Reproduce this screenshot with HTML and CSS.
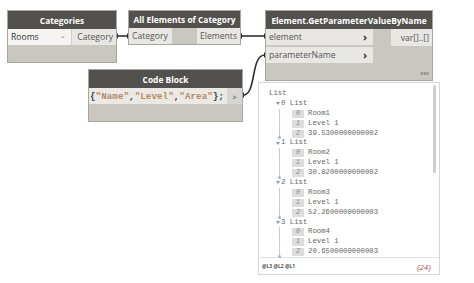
FILE: index.html
```html
<!DOCTYPE html>
<html lang="en">
<head>
    <meta charset="UTF-8">
    <title>Dynamo - Get Parameter Values</title>
    <link rel="stylesheet" href="styles.css">
</head>
<body>
    <div class="canvas">
        <svg class="wires" width="474" height="283" viewBox="0 0 474 283">
            <path d="M117 36 H128" />
            <path d="M241 36 H265" />
            <path d="M243 95 C 257 95, 250 55, 265 55" />
            <rect x="116" y="33.5" width="2" height="5" />
            <rect x="127" y="33.5" width="2" height="5" />
            <rect x="240" y="33.5" width="2" height="5" />
            <rect x="264" y="33.5" width="2" height="5" />
            <rect x="264" y="52.5" width="2" height="5" />
            <rect x="242" y="92.5" width="2" height="5" />
        </svg>

        <!-- Categories -->
        <div class="node node-categories">
            <div class="node-title">Categories</div>
            <div class="node-row">
                <div class="dropdown">
                    <span>Rooms</span>
                    <span class="caret">&#8964;</span>
                </div>
                <div class="port out">Category</div>
            </div>
            <div class="node-foot"></div>
        </div>

        <!-- All Elements of Category -->
        <div class="node node-elements">
            <div class="node-title">All Elements of Category</div>
            <div class="node-row">
                <div class="port in">Category</div>
                <div class="spacer"></div>
                <div class="port out">Elements</div>
            </div>
        </div>

        <!-- Element.GetParameterValueByName -->
        <div class="node node-param">
            <div class="node-title">Element.GetParameterValueByName</div>
            <div class="param-body">
                <div class="inputs">
                    <div class="port in"><span>element</span><b>&#8250;</b></div>
                    <div class="port in"><span>parameterName</span><b>&#8250;</b></div>
                </div>
                <div class="outputs">
                    <div class="port out">var[]..[]</div>
                </div>
            </div>
            <div class="lacing">xxx</div>
        </div>

        <!-- Code Block -->
        <div class="node node-code">
            <div class="node-title">Code Block</div>
            <div class="node-row code-row">
                <div class="code">{<em>"Name"</em>,<em>"Level"</em>,<em>"Area"</em>};</div>
                <div class="code-port">&gt;</div>
            </div>
            <div class="node-foot"></div>
        </div>

        <!-- Watch preview -->
        <div class="preview">
            <div class="preview-list">
                <div class="ln">List</div>

                <div class="ln sub"><span class="tog"></span>0 List</div>
                <div class="items">
                    <div class="ln"><span class="idx">0</span>Room1</div>
                    <div class="ln"><span class="idx">1</span>Level 1</div>
                    <div class="ln"><span class="idx">2</span>39.5300000000002</div>
                </div>

                <div class="ln sub"><span class="tog"></span>1 List</div>
                <div class="items">
                    <div class="ln"><span class="idx">0</span>Room2</div>
                    <div class="ln"><span class="idx">1</span>Level 1</div>
                    <div class="ln"><span class="idx">2</span>30.8200000000002</div>
                </div>

                <div class="ln sub"><span class="tog"></span>2 List</div>
                <div class="items">
                    <div class="ln"><span class="idx">0</span>Room3</div>
                    <div class="ln"><span class="idx">1</span>Level 1</div>
                    <div class="ln"><span class="idx">2</span>52.2600000000003</div>
                </div>

                <div class="ln sub"><span class="tog"></span>3 List</div>
                <div class="items">
                    <div class="ln"><span class="idx">0</span>Room4</div>
                    <div class="ln"><span class="idx">1</span>Level 1</div>
                    <div class="ln"><span class="idx">2</span>20.6500000000003</div>
                </div>
            </div>
            <div class="scrollbar"></div>
            <div class="preview-foot">
                <span class="levels">@L3 @L2 @L1</span>
                <span class="count">{24}</span>
            </div>
        </div>
    </div>
</body>
</html>
```

FILE: styles.css
```css
body {
    margin: 0;
    background: #ffffff;
    font-family: 'Open Sans', 'Noto Sans', Arial, sans-serif;
}
.canvas {
    position: relative;
    width: 474px;
    height: 283px;
    overflow: hidden;
}
.wires {
    position: absolute;
    left: 0;
    top: 0;
}
.wires path {
    fill: none;
    stroke: #2e2e2e;
    stroke-width: 1.6;
}
.wires rect {
    fill: #2e2e2e;
}

/* nodes */
.node {
    position: absolute;
    background: #cac7c1;
    border: 1px solid #a9a6a1;
    box-sizing: border-box;
    display: flex;
    flex-direction: column;
}
.node-title {
    height: 18px;
    background: #53514e;
    color: #ffffff;
    font-size: 8.4px;
    font-weight: 700;
    display: flex;
    align-items: center;
    justify-content: center;
    white-space: nowrap;
}
.node-row {
    display: flex;
    height: 16px;
}
.port {
    background: #e8e7e4;
    color: #555;
    font-size: 8.6px;
    display: flex;
    align-items: center;
    white-space: nowrap;
}
.port.in {
    padding-left: 3px;
}
.port.out {
    justify-content: flex-end;
    padding-right: 3px;
}
.spacer {
    flex: 1;
}
.node-foot {
    flex: 1;
}

.node-categories {
    left: 7px;
    top: 10px;
    width: 110px;
    height: 53px;
}
.dropdown {
    width: 64px;
    background: #f4f3f1;
    border-right: 1px solid #cfcdc9;
    display: flex;
    align-items: center;
    justify-content: space-between;
    padding: 0 5px 0 3px;
    box-sizing: border-box;
    font-size: 8.6px;
    color: #333;
}
.dropdown .caret {
    font-size: 7px;
    color: #777;
    margin-top: -4px;
}
.node-categories .port.out {
    flex: 1;
}

.node-elements {
    left: 128px;
    top: 10px;
    width: 113px;
    height: 35px;
}
.node-elements .port {
    width: 40px;
}
.node-elements .port.out {
    width: 40px;
}

.node-param {
    left: 265px;
    top: 10px;
    width: 168px;
    height: 71px;
}
.param-body {
    display: flex;
    justify-content: space-between;
}
.inputs {
    width: 107px;
    display: flex;
    flex-direction: column;
    gap: 2px;
}
.inputs .port {
    height: 16px;
    justify-content: space-between;
    padding-right: 6px;
}
.inputs .port b {
    font-size: 11px;
    color: #333;
    margin-top: -2px;
}
.outputs .port {
    height: 17px;
    width: 38px;
}
.lacing {
    flex: 1;
    display: flex;
    align-items: flex-end;
    justify-content: flex-end;
    padding: 0 3px 4px 0;
    font-size: 5px;
    font-weight: 700;
    color: #8a8782;
}

.node-code {
    left: 88px;
    top: 69px;
    width: 155px;
    height: 53px;
}
.code-row {
    background: #ebe9e6;
}
.code {
    flex: 1;
    font-family: 'Liberation Mono', 'DejaVu Sans Mono', monospace;
    font-size: 9.3px;
    font-weight: 700;
    color: #444;
    display: flex;
    align-items: center;
    padding-left: 1px;
    white-space: nowrap;
}
.code em {
    font-style: normal;
    color: #b78a5c;
}
.code-port {
    width: 15px;
    background: #d8d6d2;
    font-size: 8px;
    color: #444;
    display: flex;
    align-items: center;
    justify-content: center;
}

/* watch preview */
.preview {
    position: absolute;
    left: 258px;
    top: 82px;
    width: 182px;
    height: 193px;
    border: 1px solid #d6d6d6;
    box-sizing: border-box;
    background: #ffffff;
    display: flex;
    flex-direction: column;
}
.preview-list {
    flex: 1;
    padding: 6px 0 0 10px;
    font-family: 'Liberation Mono', 'DejaVu Sans Mono', monospace;
    font-size: 7.3px;
    color: #666;
}
.ln {
    height: 9.9px;
    line-height: 9.9px;
    display: flex;
    align-items: center;
    white-space: nowrap;
}
.ln.sub {
    padding-left: 7px;
}
.tog {
    width: 0;
    height: 0;
    border-left: 2px solid transparent;
    border-right: 2px solid transparent;
    border-top: 3px solid #6a9bd1;
    margin-right: 1px;
}
.items {
    margin-left: 10px;
    padding-left: 12px;
    border-left: 1px solid #b9cde6;
    position: relative;
}
.items::after {
    content: "";
    position: absolute;
    left: -2px;
    bottom: -1px;
    width: 3px;
    height: 3px;
    border-radius: 50%;
    background: #9fb8d8;
}
.idx {
    width: 12px;
    height: 8px;
    margin-right: 4px;
    background: #dcdcdc;
    color: #888;
    font-size: 6.5px;
    font-style: italic;
    display: flex;
    align-items: center;
    justify-content: center;
}
.scrollbar {
    position: absolute;
    right: 3px;
    top: 2px;
    width: 3px;
    height: 88px;
    border-radius: 2px;
    background: #cfcfcf;
}
.preview-foot {
    height: 19px;
    border-top: 1px solid #e2e2e2;
    display: flex;
    align-items: center;
    justify-content: space-between;
    padding: 0 8px 0 3px;
}
.levels {
    font-size: 5px;
    font-weight: 700;
    color: #555;
}
.count {
    font-size: 8px;
    font-style: italic;
    color: #c0504d;
}
```
